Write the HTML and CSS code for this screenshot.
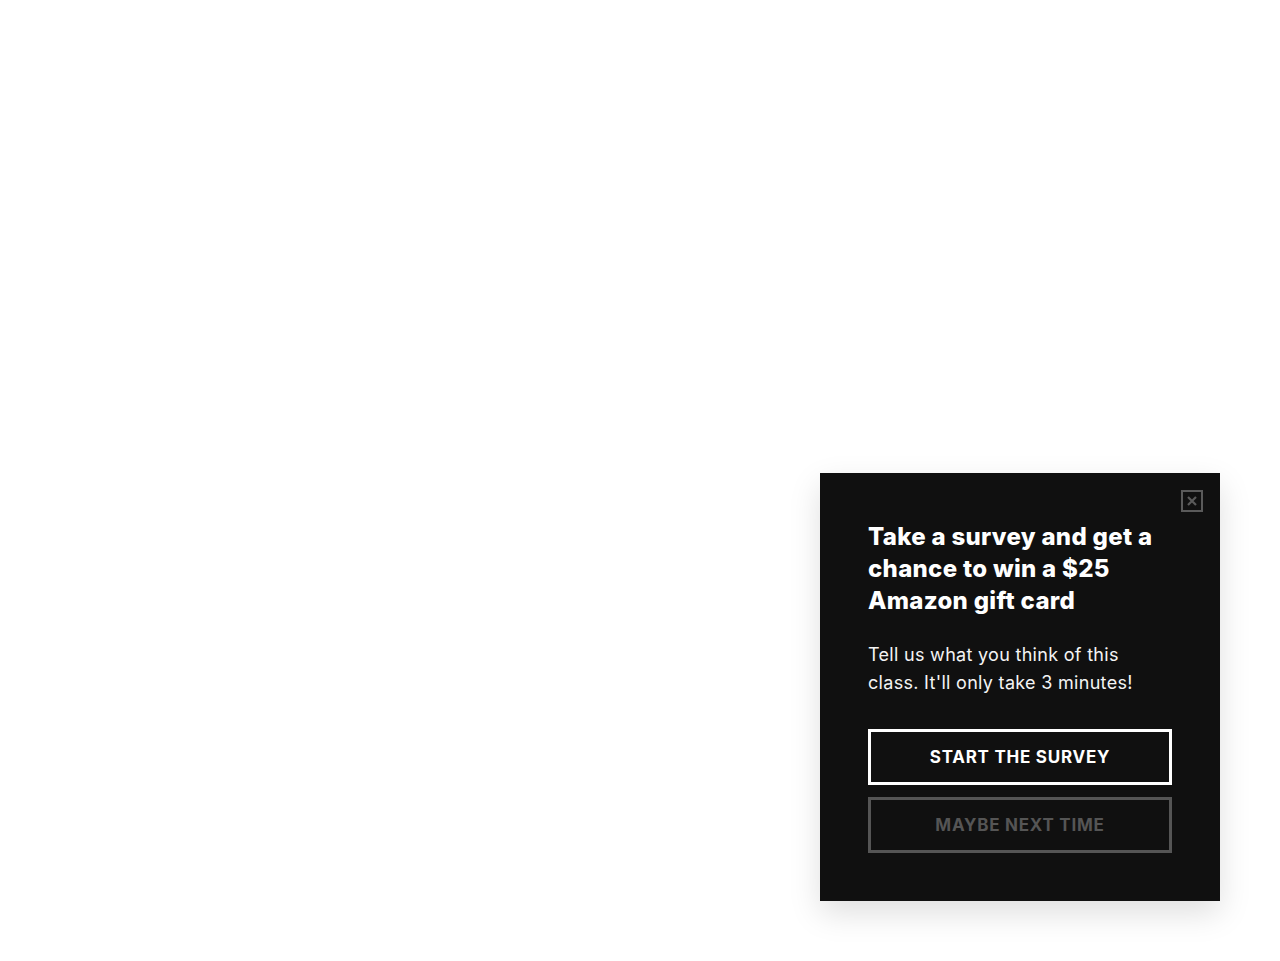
FILE: index.html
```html
<!DOCTYPE html>
<html>
<head>
<meta charset="utf-8">
<link rel="stylesheet" href="styles.css">
</head>
<body>
<div class="popup">
  <button class="close" aria-label="Close">
    <svg width="10" height="10" viewBox="0 0 10 10"><path d="M1 1L9 9M9 1L1 9" stroke="#5a5a5a" stroke-width="2.2" fill="none"/></svg>
  </button>
  <h2 class="title">Take a survey and get a chance to win a $25 Amazon gift card</h2>
  <p class="text">Tell us what you think of this class. It'll only take 3 minutes!</p>
  <div class="actions">
    <button class="btn btn-primary">START THE SURVEY</button>
    <button class="btn btn-secondary">MAYBE NEXT TIME</button>
  </div>
</div>
</body>
</html>
```
FILE: styles.css
```css
html, body {
  margin: 0;
  padding: 0;
  background: #fff;
  width: 1280px;
  height: 961px;
  overflow: hidden;
}
body {
  font-family: Inter, "Noto Sans", sans-serif;
  position: relative;
}
.popup {
  position: absolute;
  left: 820px;
  top: 473px;
  width: 400px;
  box-sizing: border-box;
  padding: 48px 48px 48px;
  background: #101010;
  color: #fff;
  box-shadow: 0 12px 30px rgba(0,0,0,0.13);
}
.close {
  position: absolute;
  top: 17px;
  right: 17px;
  width: 22px;
  height: 22px;
  box-sizing: border-box;
  border: 2px solid #5a5a5a;
  background: transparent;
  padding: 0;
  display: flex;
  align-items: center;
  justify-content: center;
  cursor: pointer;
}
.close svg { display: block; }
.title {
  margin: 0 0 24px;
  font-size: 24px;
  line-height: 32px;
  font-weight: 800;
  letter-spacing: 0.3px;
}
.text {
  margin: 0 0 32px;
  font-size: 18px;
  line-height: 28px;
  font-weight: 400;
  letter-spacing: 0.3px;
  color: #f4f4f4;
}
.actions {
  display: flex;
  flex-direction: column;
  gap: 12px;
}
.btn {
  height: 56px;
  width: 100%;
  box-sizing: border-box;
  background: transparent;
  font-family: inherit;
  font-size: 17px;
  font-weight: 700;
  letter-spacing: 0.75px;
  cursor: pointer;
}
.btn-primary {
  border: 3px solid #fff;
  color: #fff;
}
.btn-secondary {
  border: 3px solid #555;
  color: #555;
}
```
